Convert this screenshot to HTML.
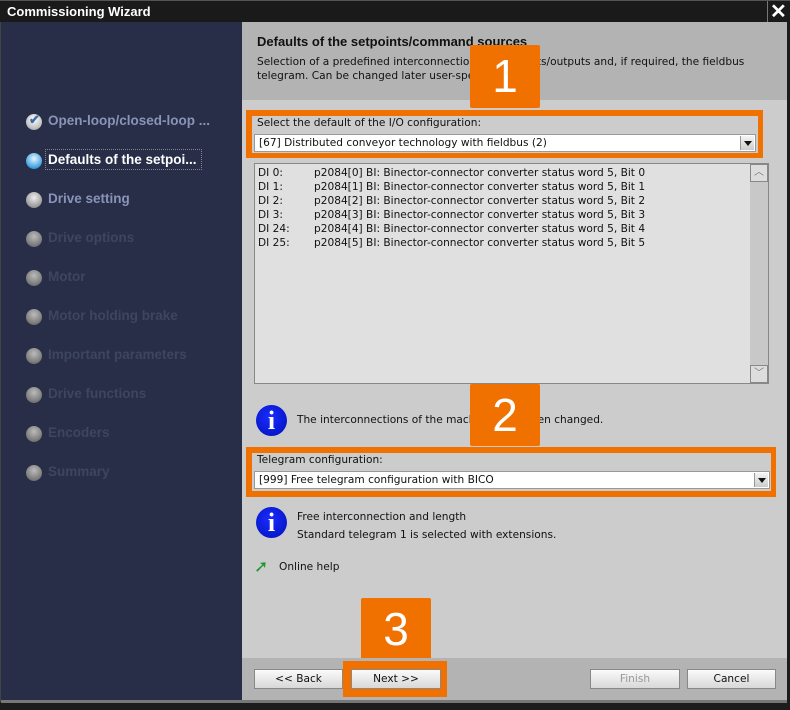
<!DOCTYPE html>
<html><head><meta charset="utf-8"><style>
*{margin:0;padding:0;box-sizing:border-box}
body{width:790px;height:710px;background:#1c1c1c;position:relative;overflow:hidden;font-family:"DejaVu Sans","Liberation Sans",sans-serif;font-size:10.6px;color:#111}
.a{position:absolute}
.title{left:0;top:0;width:790px;height:22px;background:#1a1a1a;border-top:1px solid #555}
.title span{position:absolute;left:7px;top:3px;color:#fff;font-weight:bold;font-size:13px;font-family:"Liberation Sans",sans-serif}
.left{left:1px;top:22px;width:241px;height:678px;background:#282e47}
.nav{position:absolute;left:25px;height:18px;font-weight:bold;font-size:13.5px;white-space:nowrap;font-family:"Liberation Sans",sans-serif}
.nav i{position:absolute;left:0;top:1px;width:16px;height:16px;border-radius:50%;background:radial-gradient(circle at 50% 35%,#eee,#999 70%,#777);}
.nav b{position:absolute;left:22px;top:0;}
.dis b{color:#3d4560}
.dis i{background:radial-gradient(circle at 50% 35%,#bbb,#777 70%,#555)}
.right{left:242px;top:22px;width:545px;height:678px;background:#cccccc}
.hdr{left:242px;top:22px;width:545px;height:78px;background:#b3b3b3}
.ob{background:#f07000}
.badge{background:#f07000;color:#fff;font-family:"Liberation Sans",sans-serif;font-size:46px;text-align:center;line-height:62px;border-radius:2px}
.combo{background:#fff;border:1px solid #999;height:18px;padding-left:4px;line-height:16px}
.combo .dd{position:absolute;right:1px;top:1px;width:14px;height:14px;background:linear-gradient(#f4f4f4,#ccc);border-left:1px solid #999}
.combo .dd:after{content:"";position:absolute;left:3px;top:5px;border:4px solid transparent;border-top:5px solid #111;border-bottom:0}
.info{width:31px;height:31px;border-radius:50%;background:radial-gradient(circle at 45% 40%,#1a2cff,#0010b8);color:#fff;font-family:"Liberation Serif",serif;font-weight:bold;font-size:26px;text-align:center;line-height:32px}
.btn{height:20px;border:1px solid #888;background:linear-gradient(#fafafa,#d8d8d8);text-align:center;line-height:18px}
</style></head><body>
<div class="a title"><span>Commissioning Wizard</span>
<div class="a" style="left:767px;top:0;width:1px;height:22px;background:#777"></div>
<div class="a" style="left:770px;top:-2px;color:#fff;font-size:20px;font-weight:bold;font-family:'Liberation Sans',sans-serif">✕</div></div>
<div class="a left">
<div class="nav" style="top:91px"><i style="background:radial-gradient(circle at 50% 35%,#fff,#bbb 70%,#888)"></i><span class="a" style="left:3px;top:-1px;color:#3a6ab0;font-size:13px">✔</span><b style="color:#8a94b8">Open-loop/closed-loop ...</b></div>
<div class="nav" style="top:130px"><i style="background:radial-gradient(circle at 50% 35%,#e8f6ff,#3aa0e0 70%,#1a70b0)"></i><b style="color:#fff;outline:1px dotted #888;outline-offset:2px;padding-right:2px">Defaults of the setpoi...</b></div>
<div class="nav" style="top:169px"><i></i><b style="color:#8a94b8">Drive setting</b></div>
<div class="nav dis" style="top:208px"><i></i><b>Drive options</b></div>
<div class="nav dis" style="top:247px"><i></i><b>Motor</b></div>
<div class="nav dis" style="top:286px"><i></i><b>Motor holding brake</b></div>
<div class="nav dis" style="top:325px"><i></i><b>Important parameters</b></div>
<div class="nav dis" style="top:364px"><i></i><b>Drive functions</b></div>
<div class="nav dis" style="top:403px"><i></i><b>Encoders</b></div>
<div class="nav dis" style="top:442px"><i></i><b>Summary</b></div>
</div>
<div class="a right"></div>
<div class="a hdr"></div>
<div class="a" style="left:257px;top:34px;font-weight:bold;font-size:13px;font-family:'Liberation Sans',sans-serif">Defaults of the setpoints/command sources</div>
<div class="a" style="left:257px;top:55px;line-height:14px;width:510px">Selection of a predefined interconnection of the inputs/outputs and, if required, the fieldbus<br>telegram. Can be changed later user-specifically.</div>

<div class="a ob" style="left:246px;top:110px;width:517px;height:48px"></div>
<div class="a" style="left:252px;top:116px;width:506px;height:37px;background:#cccccc"></div>
<div class="a" style="left:257px;top:117px">Select the default of the I/O configuration:</div>
<div class="a combo" style="left:254px;top:134px;width:502px">[67] Distributed conveyor technology with fieldbus (2)<div class="dd"></div></div>

<div class="a" style="left:254px;top:163px;width:515px;height:221px;background:#e0e0e0;border:1px solid #888"></div>
<div class="a" style="left:750px;top:164px;width:18px;height:219px;background:#c8c8c8"></div>
<div class="a" style="left:750px;top:164px;width:18px;height:18px;border:1px solid #888;background:#ddd;color:#777;text-align:center;font-size:10px;line-height:16px">︿</div>
<div class="a" style="left:750px;top:365px;width:18px;height:18px;border:1px solid #888;background:#ddd;color:#777;text-align:center;font-size:10px;line-height:16px">﹀</div>
<div class="a" style="left:258px;top:166px;line-height:14px;white-space:pre">DI 0:
DI 1:
DI 2:
DI 3:
DI 24:
DI 25:</div>
<div class="a" style="left:314px;top:166px;line-height:14px;white-space:pre">p2084[0] BI: Binector-connector converter status word 5, Bit 0
p2084[1] BI: Binector-connector converter status word 5, Bit 1
p2084[2] BI: Binector-connector converter status word 5, Bit 2
p2084[3] BI: Binector-connector converter status word 5, Bit 3
p2084[4] BI: Binector-connector converter status word 5, Bit 4
p2084[5] BI: Binector-connector converter status word 5, Bit 5</div>

<div class="a info" style="left:256px;top:405px">i</div>
<div class="a" style="left:297px;top:414px">The interconnections of the machine have been changed.</div>

<div class="a ob" style="left:246px;top:447px;width:530px;height:50px"></div>
<div class="a" style="left:252px;top:453px;width:519px;height:38px;background:#cccccc"></div>
<div class="a" style="left:257px;top:454px">Telegram configuration:</div>
<div class="a combo" style="left:254px;top:471px;width:516px">[999] Free telegram configuration with BICO<div class="dd"></div></div>

<div class="a info" style="left:256px;top:507px">i</div>
<div class="a" style="left:297px;top:508px;line-height:18px">Free interconnection and length<br>Standard telegram 1 is selected with extensions.</div>
<div class="a" style="left:254px;top:557px;color:#1a9a30;font-size:17px;font-weight:bold">➚</div>
<div class="a" style="left:279px;top:561px">Online help</div>

<div class="a badge" style="left:470px;top:45px;width:70px;height:63px">1</div>
<div class="a badge" style="left:470px;top:384px;width:70px;height:62px">2</div>
<div class="a badge" style="left:361px;top:598px;width:70px;height:62px">3</div>

<div class="a" style="left:242px;top:658px;width:545px;height:42px;background:#b3b3b3"></div>
<div class="a ob" style="left:343px;top:661px;width:104px;height:36px"></div>
<div class="a btn" style="left:254px;top:669px;width:89px">&lt;&lt; Back</div>
<div class="a btn" style="left:351px;top:669px;width:90px">Next &gt;&gt;</div>
<div class="a btn" style="left:590px;top:669px;width:90px;color:#999">Finish</div>
<div class="a btn" style="left:687px;top:669px;width:89px">Cancel</div>
<div class="a" style="left:1px;top:700px;width:786px;height:3px;background:#777"></div>
<div class="a" style="left:0;top:22px;width:1px;height:680px;background:#444"></div>
</body></html>
